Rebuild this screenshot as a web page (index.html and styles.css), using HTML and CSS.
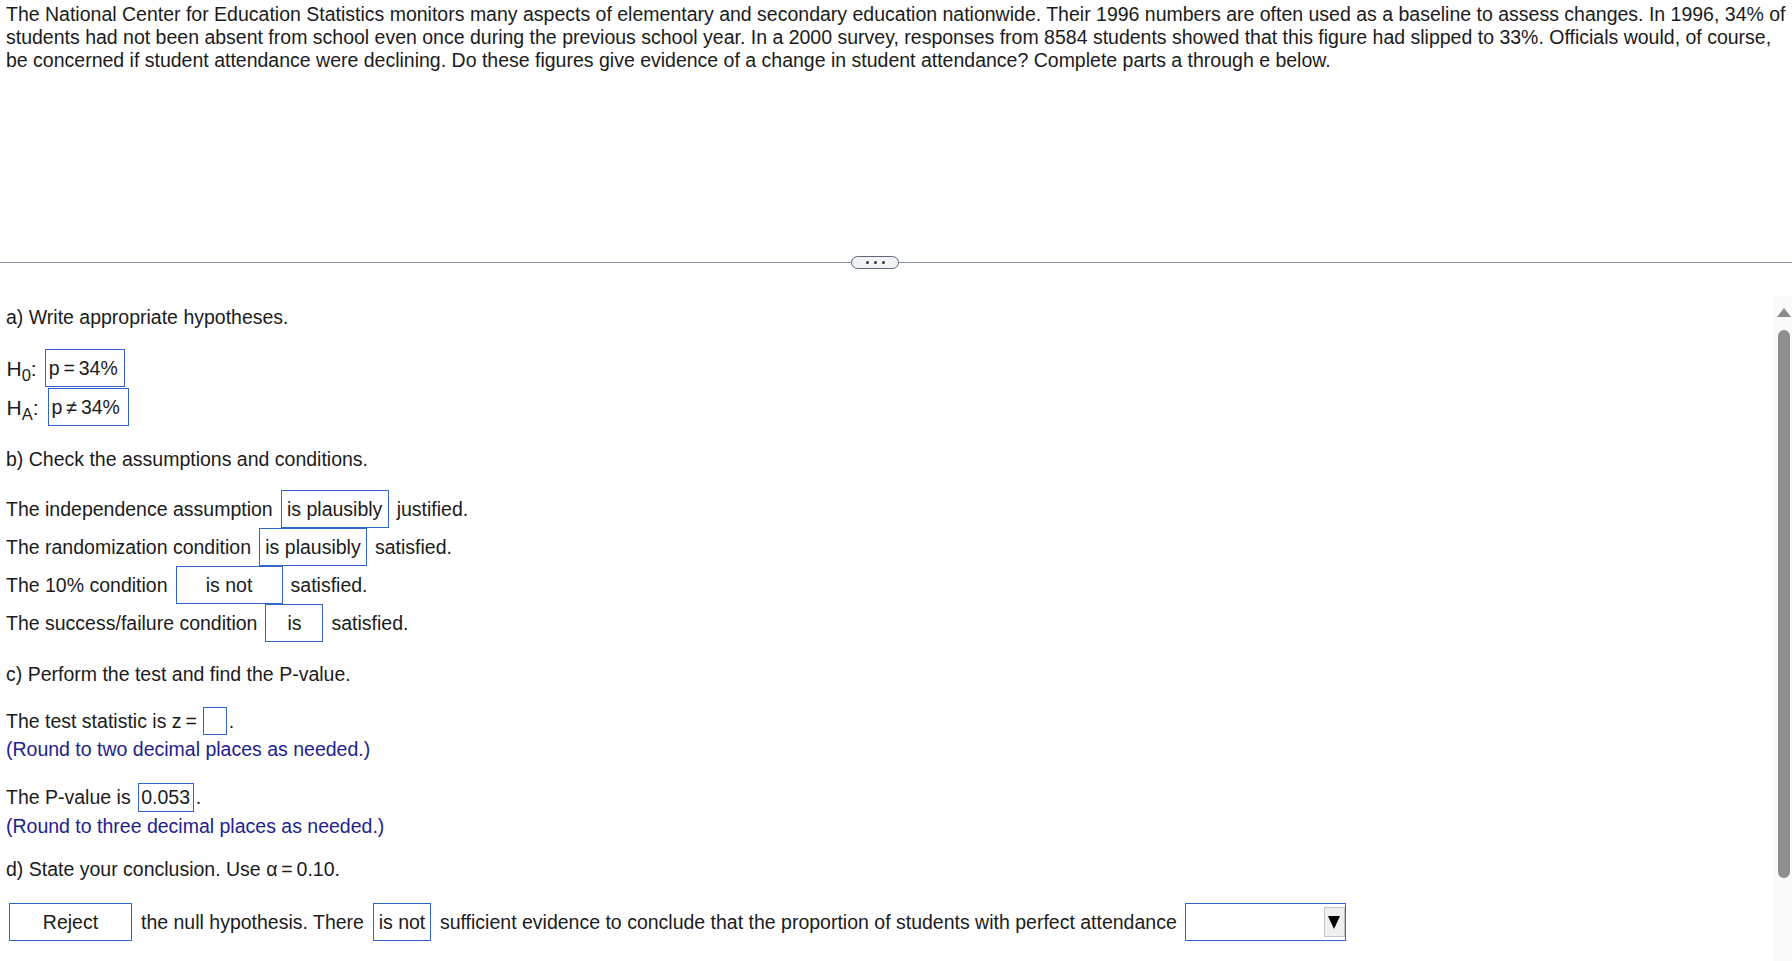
FILE: index.html
```html
<!DOCTYPE html>
<html lang="en">
<head>
<meta charset="utf-8">
<title>Hypothesis test</title>
<link rel="stylesheet" href="styles.css">
</head>
<body>
<div class="page">
  <div class="question">
    <p class="qtext">The National Center for Education Statistics monitors many aspects of elementary and secondary education nationwide. Their 1996 numbers are often used as a baseline to assess changes. In 1996, 34% of students had not been absent from school even once during the previous school year. In a 2000 survey, responses from 8584 students showed that this figure had slipped to 33%. Officials would, of course, be concerned if student attendance were declining. Do these figures give evidence of a change in student attendance? Complete parts a through e below.</p>
  </div>
  <div class="divider"><span class="pill"><i></i><i></i><i></i></span></div>
  <div class="work">
    <div class="content">
      <div class="line head-a">a) Write appropriate hypotheses.</div>
      <div class="row hyp hyp-first">
        <span class="hlabel">H<sub>0</sub>:</span>
        <span class="box hbox">p&#8201;=&#8201;34%</span>
      </div>
      <div class="row hyp hyp-second">
        <span class="hlabel">H<sub>A</sub>:</span>
        <span class="box hbox hbox-a">p&#8201;&#8800;&#8201;34%</span>
      </div>

      <div class="line head-b">b) Check the assumptions and conditions.</div>
      <div class="row cond cond-first">
        <span>The independence assumption</span>
        <span class="box sel w108">is plausibly</span>
        <span>justified.</span>
      </div>
      <div class="row cond">
        <span>The randomization condition</span>
        <span class="box sel w108">is plausibly</span>
        <span>satisfied.</span>
      </div>
      <div class="row cond">
        <span>The 10% condition</span>
        <span class="box sel w107">is not</span>
        <span>satisfied.</span>
      </div>
      <div class="row cond">
        <span>The success/failure condition</span>
        <span class="box sel w58">is</span>
        <span>satisfied.</span>
      </div>

      <div class="line head-c">c) Perform the test and find the P-value.</div>
      <div class="row stat">
        <span>The test statistic is z&#8201;=</span>
        <span class="box zbox"></span>
        <span>.</span>
      </div>
      <div class="line hint hint-gap">(Round to two decimal places as needed.)</div>
      <div class="row pval">
        <span>The P-value is</span>
        <span class="box pbox">0.053</span>
        <span>.</span>
      </div>
      <div class="line hint hint-gap">(Round to three decimal places as needed.)</div>

      <div class="line head-d">d) State your conclusion. Use &#945;&#8201;=&#8201;0.10.</div>
      <div class="row final">
        <span class="box sel reject">Reject</span>
        <span>the null hypothesis. There</span>
        <span class="box sel w58">is not</span>
        <span>sufficient evidence to conclude that the proportion of students with perfect attendance</span>
        <span class="box ddbox"><span class="ddbtn"><span class="ddarrow"></span></span></span>
      </div>
    </div>
    <div class="scrollbar">
      <span class="sb-arrow"></span>
      <span class="sb-thumb"></span>
    </div>
  </div>
</div>
</body>
</html>
```

FILE: styles.css
```css
html, body {
  margin: 0;
  padding: 0;
  background: #ffffff;
}

body {
  font-family: "Liberation Sans", Arial, sans-serif;
  font-size: 19.5px;
  line-height: 23px;
  color: #1b1b1b;
}

.page {
  width: 1792px;
  height: 961px;
  overflow: hidden;
  display: flex;
  flex-direction: column;
}

.question {
  height: 262px;
  box-sizing: border-box;
  padding: 2.5px 2px 0 6px;
  flex-shrink: 0;
}

.qtext {
  margin: 0;
}

.divider {
  height: 1px;
  background: #88919e;
  position: relative;
  flex-shrink: 0;
}

.pill {
  position: absolute;
  left: 851px;
  top: -6px;
  width: 48px;
  height: 13px;
  box-sizing: border-box;
  border: 1px solid #5e6b7c;
  border-radius: 7px;
  background: #f1f3f6;
  display: flex;
  justify-content: center;
  align-items: center;
  gap: 5px;
}

.pill i {
  display: block;
  width: 3px;
  height: 3px;
  border-radius: 50%;
  background: #333a44;
}

.work {
  margin-top: 33px;
  flex: 1;
  display: flex;
  min-height: 0;
}

.content {
  flex: 1;
  padding: 10px 0 0 6px;
}

.line {
  height: 23px;
  white-space: nowrap;
}

.row {
  display: flex;
  align-items: center;
  white-space: nowrap;
}

.box {
  box-sizing: border-box;
  border: 1px solid #3366cc;
  height: 100%;
  display: flex;
  align-items: center;
  justify-content: center;
}

/* hypotheses */
.hyp {
  height: 38px;
}

.hyp-first {
  margin-top: 20px;
}

.hyp-second {
  margin-top: 1px;
}

.hlabel {
  font-size: 21px;
  padding-left: 0.5px;
  margin-right: 8px;
}

.hlabel sub {
  font-size: 16.5px;
  vertical-align: -5px;
  line-height: 0;
}

.hbox {
  width: 80px;
  justify-content: flex-start;
  padding-left: 3px;
}

.hbox-a {
  width: 81px;
  margin-left: 1px;
}

/* conditions */
.head-b {
  margin-top: 21.5px;
}

.cond {
  height: 38px;
}

.cond-first {
  margin-top: 19.5px;
}

.sel {
  margin: 0 8px;
}

.w108 {
  width: 108px;
}

.w107 {
  width: 107px;
}

.w58 {
  width: 58px;
}

/* test */
.head-c {
  margin-top: 20.5px;
}

.stat {
  height: 28px;
  margin-top: 21.5px;
}

.zbox {
  width: 24px;
  margin-left: 6px;
  margin-right: 2px;
}

.hint {
  color: #22228e;
}

.hint-gap {
  margin-top: 3px;
}

.pval {
  height: 29px;
  margin-top: 22px;
}

.pbox {
  width: 56px;
  margin-left: 7px;
  margin-right: 2px;
}

/* conclusion */
.head-d {
  margin-top: 19.5px;
}

.final {
  height: 38px;
  margin-top: 22.5px;
}

.final .sel {
  margin: 0 9px;
}

.final .reject {
  width: 123px;
  margin-left: 3px;
}

.ddbox {
  width: 161px;
  margin-left: 8px;
  justify-content: flex-end;
}

.ddbtn {
  box-sizing: border-box;
  width: 21px;
  height: 30px;
  background: #efefef;
  border: 1px solid #c3c3c3;
  display: flex;
  align-items: center;
  justify-content: center;
}

.ddarrow {
  width: 0;
  height: 0;
  border-left: 6px solid transparent;
  border-right: 6px solid transparent;
  border-top: 13px solid #000000;
}

/* scrollbar */
.scrollbar {
  width: 19px;
  background: #fafafa;
  display: flex;
  flex-direction: column;
  flex-shrink: 0;
}

.sb-arrow {
  width: 0;
  height: 0;
  margin: 12px 0 0 4px;
  border-left: 7px solid transparent;
  border-right: 7px solid transparent;
  border-bottom: 9px solid #8a8a8a;
}

.sb-thumb {
  width: 12px;
  height: 548px;
  margin: 13px 0 0 5px;
  border-radius: 6px;
  background: #8e8e8e;
}
```
